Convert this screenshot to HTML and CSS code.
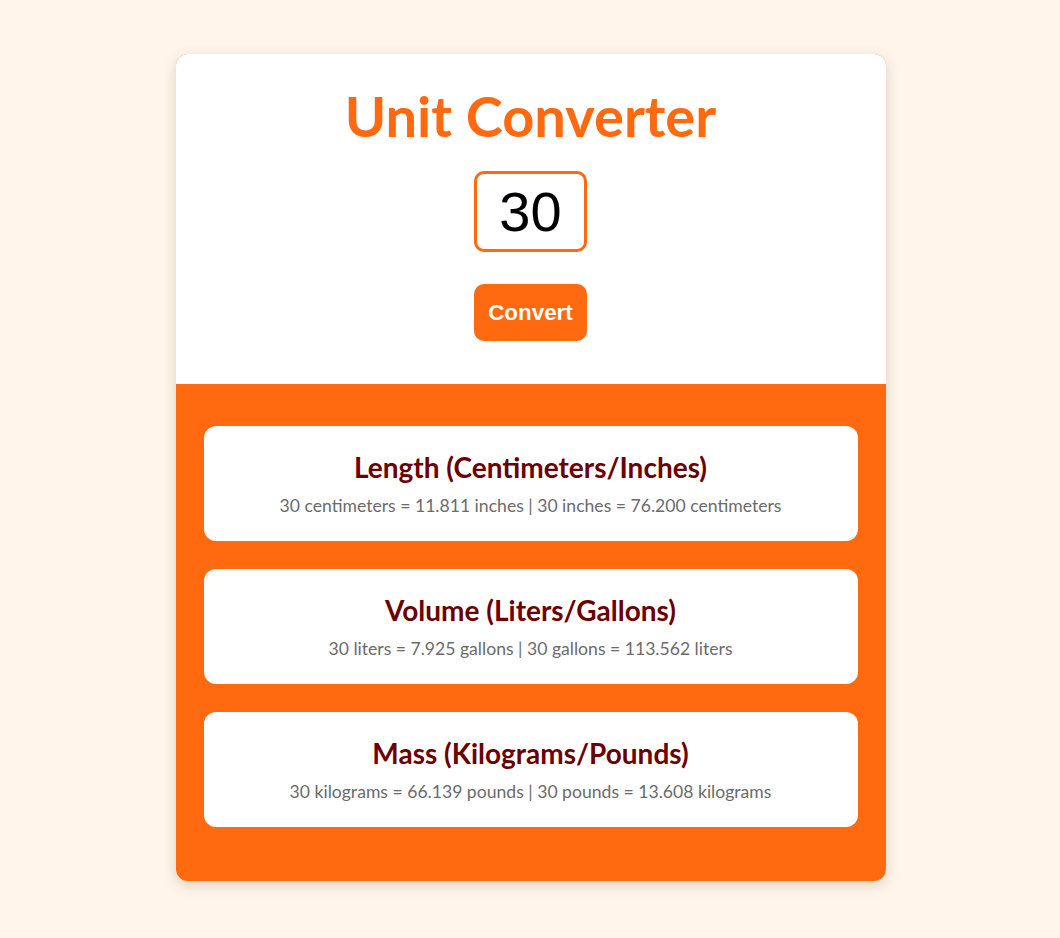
FILE: index.html
```html
<!DOCTYPE html>
<html lang="en">
<head>
<meta charset="utf-8">
<title>Unit Converter</title>
<link rel="stylesheet" href="styles.css">
</head>
<body>
<main class="container">
  <section class="top">
    <h1 class="title">Unit Converter</h1>
    <input class="num-input" type="text" value="30">
    <button class="convert-btn" type="button">Convert</button>
  </section>
  <section class="results">
    <div class="card">
      <h2 class="card-title">Length (Centimeters/Inches)</h2>
      <p class="card-text">30 centimeters = 11.811 inches | 30 inches = 76.200 centimeters</p>
    </div>
    <div class="card">
      <h2 class="card-title">Volume (Liters/Gallons)</h2>
      <p class="card-text">30 liters = 7.925 gallons | 30 gallons = 113.562 liters</p>
    </div>
    <div class="card">
      <h2 class="card-title">Mass (Kilograms/Pounds)</h2>
      <p class="card-text">30 kilograms = 66.139 pounds | 30 pounds = 13.608 kilograms</p>
    </div>
  </section>
</main>
</body>
</html>
```
FILE: styles.css
```css
* { box-sizing: border-box; }
body {
  margin: 0;
  padding: 54px 0 40px 1px;
  background: #fff5ea;
  font-family: "Lato", "Noto Sans", sans-serif;
}
.container {
  width: 710px;
  margin: 0 auto;
  border-radius: 12px;
  overflow: hidden;
  box-shadow: 0 4px 14px rgba(80, 50, 20, 0.18);
  background: #ff690f;
}
.top {
  background: #ffffff;
  padding: 28px 0 43px;
  display: flex;
  flex-direction: column;
  align-items: center;
}
.title {
  margin: 0;
  font-size: 56px;
  line-height: 68px;
  font-weight: 700;
  color: #ff690f;
}
.num-input {
  margin-top: 21px;
  width: 113px;
  height: 81px;
  border: 3px solid #ff690f;
  border-radius: 10px;
  font-family: "Liberation Sans", Arial, sans-serif;
  font-size: 56px;
  color: #000;
  text-align: center;
  padding: 0;
  outline: none;
}
.convert-btn {
  margin-top: 32px;
  width: 113px;
  height: 57px;
  border: none;
  border-radius: 10px;
  background: #ff690f;
  color: #ffffff;
  font-family: "Liberation Sans", Arial, sans-serif;
  font-weight: 700;
  font-size: 22.4px;
  padding: 0;
}
.results {
  padding: 42px 28px 54px;
  display: flex;
  flex-direction: column;
  gap: 28px;
}
.card {
  background: #ffffff;
  border-radius: 12px;
  height: 115px;
  padding: 26px 20px 0;
  text-align: center;
}
.card-title {
  margin: 0;
  font-size: 28px;
  line-height: 31px;
  font-weight: 700;
  color: #6a0000;
}
.card-text {
  margin: 11px 0 0;
  font-size: 17.6px;
  line-height: 24px;
  color: #6b6b6b;
}
```
